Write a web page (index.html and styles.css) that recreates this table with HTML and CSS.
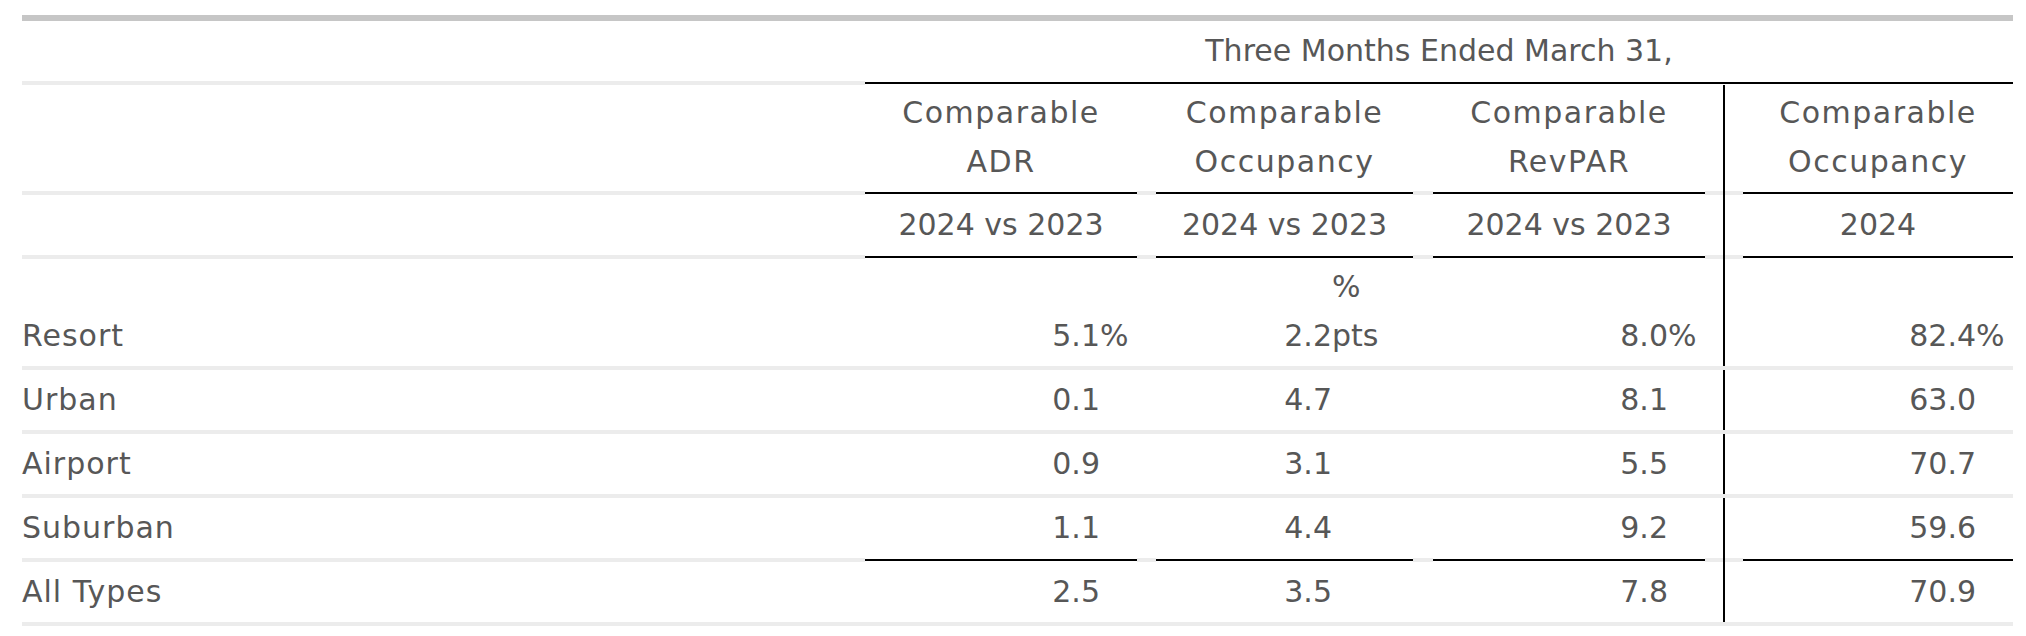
FILE: index.html
```html
<!DOCTYPE html>
<html lang="en">
<head>
<meta charset="utf-8">
<title>Comparable hotel statistics</title>
<link rel="stylesheet" href="styles.css">
</head>
<body>
<div class="table">
  <div class="topbar"></div>

  <div class="row h1">
    <div class="c"></div>
    <div class="c span">Three Months Ended March 31,</div>
  </div>
  <div class="rule">
    <div class="g"></div><div class="k span"></div>
  </div>

  <div class="row h2">
    <div class="c"></div>
    <div class="c ctr word">Comparable<br>ADR</div>
    <div class="c"></div>
    <div class="c ctr word">Comparable<br>Occupancy</div>
    <div class="c"></div>
    <div class="c ctr word">Comparable<br>RevPAR</div>
    <div class="c vl"></div>
    <div class="c ctr word">Comparable<br>Occupancy</div>
  </div>
  <div class="rule">
    <div class="g"></div><div class="k"></div><div class="g"></div><div class="k"></div><div class="g"></div><div class="k"></div><div class="g vlg"></div><div class="k"></div>
  </div>

  <div class="row">
    <div class="c"></div>
    <div class="c ctr">2024 vs 2023</div>
    <div class="c"></div>
    <div class="c ctr">2024 vs 2023</div>
    <div class="c"></div>
    <div class="c ctr">2024 vs 2023</div>
    <div class="c vl"></div>
    <div class="c ctr">2024</div>
  </div>
  <div class="rule">
    <div class="g"></div><div class="k"></div><div class="g"></div><div class="k"></div><div class="g"></div><div class="k"></div><div class="g vlg"></div><div class="k"></div>
  </div>

  <div class="row pct">
    <div class="c"></div>
    <div class="c"></div>
    <div class="c"></div>
    <div class="c val occ"><span class="n"></span><span class="s">%</span></div>
    <div class="c"></div>
    <div class="c"></div>
    <div class="c vl"></div>
    <div class="c"></div>
  </div>

  <div class="row">
    <div class="c label">Resort</div>
    <div class="c val"><span class="n">5.1</span><span class="s">%</span></div>
    <div class="c"></div>
    <div class="c val occ"><span class="n">2.2</span><span class="s">pts</span></div>
    <div class="c"></div>
    <div class="c val"><span class="n">8.0</span><span class="s">%</span></div>
    <div class="c vl"></div>
    <div class="c val"><span class="n">82.4</span><span class="s">%</span></div>
  </div>
  <div class="rule gray"></div>

  <div class="row">
    <div class="c label">Urban</div>
    <div class="c val"><span class="n">0.1</span><span class="s"></span></div>
    <div class="c"></div>
    <div class="c val occ"><span class="n">4.7</span><span class="s"></span></div>
    <div class="c"></div>
    <div class="c val"><span class="n">8.1</span><span class="s"></span></div>
    <div class="c vl"></div>
    <div class="c val"><span class="n">63.0</span><span class="s"></span></div>
  </div>
  <div class="rule gray"></div>

  <div class="row">
    <div class="c label">Airport</div>
    <div class="c val"><span class="n">0.9</span><span class="s"></span></div>
    <div class="c"></div>
    <div class="c val occ"><span class="n">3.1</span><span class="s"></span></div>
    <div class="c"></div>
    <div class="c val"><span class="n">5.5</span><span class="s"></span></div>
    <div class="c vl"></div>
    <div class="c val"><span class="n">70.7</span><span class="s"></span></div>
  </div>
  <div class="rule gray"></div>

  <div class="row">
    <div class="c label">Suburban</div>
    <div class="c val"><span class="n">1.1</span><span class="s"></span></div>
    <div class="c"></div>
    <div class="c val occ"><span class="n">4.4</span><span class="s"></span></div>
    <div class="c"></div>
    <div class="c val"><span class="n">9.2</span><span class="s"></span></div>
    <div class="c vl"></div>
    <div class="c val"><span class="n">59.6</span><span class="s"></span></div>
  </div>
  <div class="rule">
    <div class="g"></div><div class="k"></div><div class="g"></div><div class="k"></div><div class="g"></div><div class="k"></div><div class="g vlg"></div><div class="k"></div>
  </div>

  <div class="row">
    <div class="c label">All Types</div>
    <div class="c val"><span class="n">2.5</span><span class="s"></span></div>
    <div class="c"></div>
    <div class="c val occ"><span class="n">3.5</span><span class="s"></span></div>
    <div class="c"></div>
    <div class="c val"><span class="n">7.8</span><span class="s"></span></div>
    <div class="c vl"></div>
    <div class="c val"><span class="n">70.9</span><span class="s"></span></div>
  </div>
  <div class="rule gray"></div>
</div>
</body>
</html>
```

FILE: styles.css
```css
html, body {
  margin: 0;
  padding: 0;
  background: #ffffff;
}

body {
  font-family: "DejaVu Sans", "Noto Sans", sans-serif;
  font-size: 30px;
  color: #575757;
}

.table {
  margin: 15px 0 0 22px;
  width: 1991px;
}

.topbar {
  height: 6px;
  background: #c6c6c6;
}

.row,
.rule {
  display: grid;
  grid-template-columns: 843px 272px 19px 257px 20px 272px 38px 270px;
}

.row {
  height: 60px;
  line-height: 60px;
}

.row.h2 {
  height: 106px;
  box-sizing: border-box;
  padding-top: 3px;
  line-height: 49px;
}

.row.h2 .c {
  margin-top: -3px;
  padding-top: 3px;
}

.row.pct {
  height: 47px;
  box-sizing: border-box;
  line-height: 39px;
}

.row.pct .c {
  padding-top: 8px;
}

.c {
  white-space: nowrap;
}

.span {
  grid-column: 2 / 9;
  text-align: center;
}

.ctr {
  text-align: center;
}

.word {
  letter-spacing: 1.5px;
}

.label {
  letter-spacing: 1px;
}

.val {
  display: flex;
}

.val .n {
  flex: 1;
  text-align: right;
}

.val .s {
  width: 37px;
  text-align: left;
}

.val.occ .s {
  width: 81px;
}

.vl {
  background: linear-gradient(to right, transparent 18px, #000 18px, #000 20px, transparent 20px);
}

.rule {
  height: 4px;
}

.rule.gray {
  display: block;
  background: #ececec;
}

.g {
  background: #ececec;
}

.k {
  background: linear-gradient(to bottom, transparent 1px, #000 1px, #000 3px, transparent 3px);
}

.g.vlg {
  background: linear-gradient(to right, transparent 18px, #000 18px, #000 20px, transparent 20px), #ececec;
}
```
